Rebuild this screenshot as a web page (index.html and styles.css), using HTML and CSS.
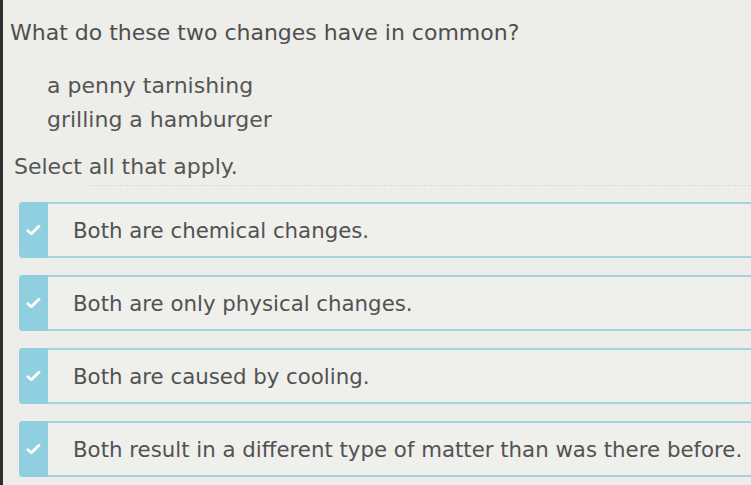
FILE: index.html
```html
<!DOCTYPE html>
<html>
<head>
<meta charset="utf-8">
<link rel="stylesheet" href="styles.css">
</head>
<body>
<div class="page">
  <h1 class="question">What do these two changes have in common?</h1>
  <ul class="items">
    <li>a penny tarnishing</li>
    <li>grilling a hamburger</li>
  </ul>
  <p class="prompt">Select all that apply.</p>
  <div class="divider"></div>
  <div class="options">
    <div class="option">
      <div class="check"><svg width="15" height="12" viewBox="0 0 15 12"><path d="M1.8 6.8 L5.3 9.8 L13 2.2" fill="none" stroke="#fff" stroke-width="2.8" stroke-linecap="round" stroke-linejoin="round"/></svg></div>
      <div class="label">Both are chemical changes.</div>
    </div>
    <div class="option">
      <div class="check"><svg width="15" height="12" viewBox="0 0 15 12"><path d="M1.8 6.8 L5.3 9.8 L13 2.2" fill="none" stroke="#fff" stroke-width="2.8" stroke-linecap="round" stroke-linejoin="round"/></svg></div>
      <div class="label">Both are only physical changes.</div>
    </div>
    <div class="option">
      <div class="check"><svg width="15" height="12" viewBox="0 0 15 12"><path d="M1.8 6.8 L5.3 9.8 L13 2.2" fill="none" stroke="#fff" stroke-width="2.8" stroke-linecap="round" stroke-linejoin="round"/></svg></div>
      <div class="label">Both are caused by cooling.</div>
    </div>
    <div class="option">
      <div class="check"><svg width="15" height="12" viewBox="0 0 15 12"><path d="M1.8 6.8 L5.3 9.8 L13 2.2" fill="none" stroke="#fff" stroke-width="2.8" stroke-linecap="round" stroke-linejoin="round"/></svg></div>
      <div class="label">Both result in a different type of matter than was there before.</div>
    </div>
  </div>
</div>
</body>
</html>
```
FILE: styles.css
```css
html, body {
  margin: 0;
  padding: 0;
}
body {
  background: #edede9;
  font-family: "DejaVu Sans", Verdana, sans-serif;
  color: #555553;
  width: 751px;
  height: 485px;
  overflow: hidden;
  border-left: 3px solid #2e2e2e;
  box-sizing: border-box;
}
.page {
  padding: 19px 0 0 7px;
}
.question {
  margin: 0;
  font-size: 22px;
  font-weight: normal;
  line-height: 28px;
  color: #4f4f4f;
}
.items {
  list-style: none;
  margin: 22px 0 0 37px;
  padding: 0;
}
.items li {
  font-size: 22px;
  line-height: 34px;
}
.prompt {
  margin: 16px 0 0 4px;
  font-size: 22px;
  line-height: 28px;
}
.divider {
  margin: 4px 0 0 80px;
  border-top: 1px dashed #dcdcd8;
}
.options {
  display: flex;
  flex-direction: column;
  gap: 17px;
  margin: 16px 0 0 9px;
}
.option {
  display: flex;
  height: 56px;
  border-top: 2px solid #a6d4dd;
  border-bottom: 2px solid #a6d4dd;
  box-sizing: border-box;
  background: #efefec;
  border-radius: 4px 0 0 4px;
}
.check {
  width: 29px;
  margin: -2px 0;
  background: #8fcfe0;
  border-radius: 4px 0 0 4px;
  display: flex;
  align-items: center;
  justify-content: center;
}
.label {
  display: flex;
  align-items: center;
  padding-left: 25px;
  font-size: 21.3px;
  color: #525252;
  white-space: nowrap;
}
```
